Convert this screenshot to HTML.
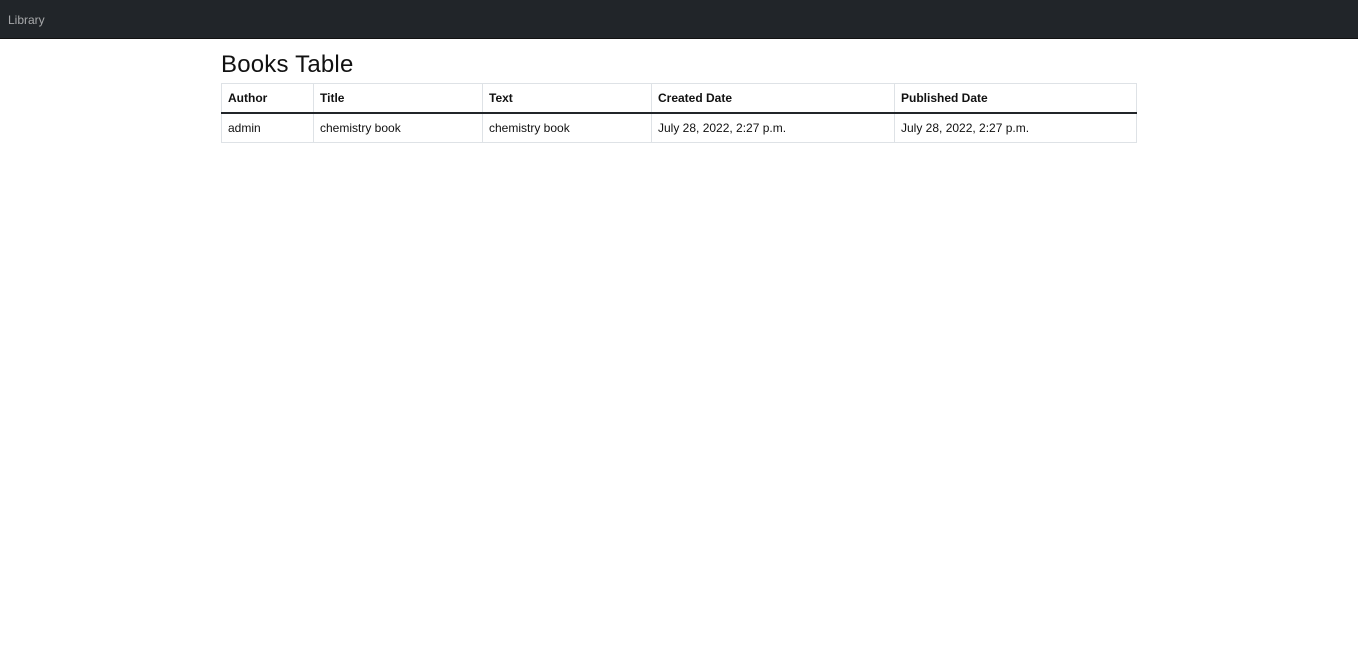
<!DOCTYPE html>
<html><head><style>
body{margin:0;font-family:"Liberation Sans","DejaVu Sans",sans-serif;background:#fff;color:#212529}
.nav{height:39px;background:#212529;border-bottom:1px solid #111;box-sizing:border-box}
.nav span{position:absolute;left:8px;top:13px;font-size:12px;color:rgba(255,255,255,.6)}
h1{position:absolute;left:221px;top:51px;margin:0;font-size:24px;font-weight:400;letter-spacing:.2px;color:#111}
table{position:absolute;left:221px;top:83px;width:916px;border-collapse:collapse;font-size:12px;color:#111}
td,th{border:1px solid #dee2e6;padding:0 6px;text-align:left;height:28px}
th{font-weight:bold;border-bottom:2px solid #212529;height:28px}
</style></head><body>
<div class="nav"><span>Library</span></div>
<h1>Books Table</h1>
<table>
<tr><th style="width:79px">Author</th><th style="width:156px">Title</th><th style="width:156px">Text</th><th style="width:230px">Created Date</th><th>Published Date</th></tr>
<tr><td>admin</td><td>chemistry book</td><td>chemistry book</td><td>July 28, 2022, 2:27 p.m.</td><td>July 28, 2022, 2:27 p.m.</td></tr>
</table>
</body></html>
